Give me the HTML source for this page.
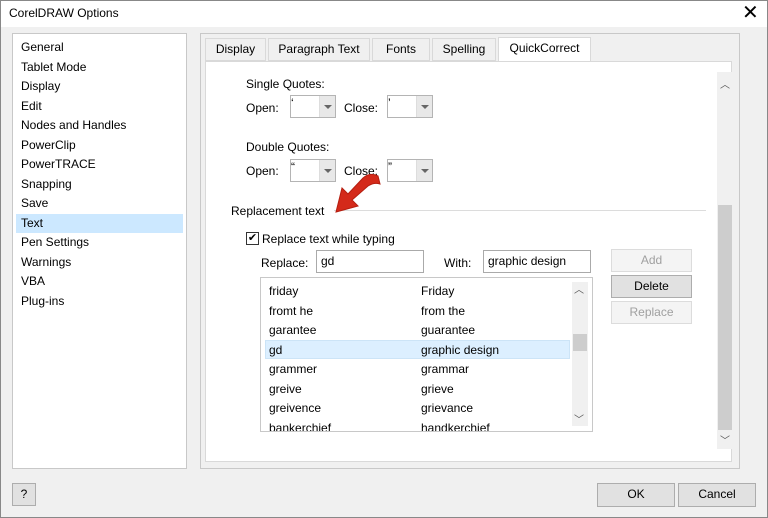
<!DOCTYPE html>
<html><head><style>
*{box-sizing:border-box;margin:0;padding:0}
body{width:768px;height:518px;background:#f0f0f0;font-family:"Liberation Sans",sans-serif;font-size:12px;color:#000;position:relative;overflow:hidden}
.a{position:absolute}
.box{position:absolute;background:#fff;border:1px solid #c8c8c8}
.btn{position:absolute;background:#e1e1e1;border:1px solid #adadad;text-align:center;line-height:20px}
.dis{background:#f4f4f4;border-color:#dcdcdc;color:#a0a0a0}
.tab{position:absolute;top:38px;height:23px;border:1px solid #d9d9d9;background:#f0f0f0;line-height:20px;text-align:center}
.dd{position:absolute;width:46px;height:23px;background:#fff;border:1px solid #b4b4b4}
.dd i{position:absolute;right:0;top:0;width:16px;height:21px;background:#e8e8e8;border-left:1px solid #ddd}
.dd i:after{content:"";position:absolute;left:4px;top:9px;border:4px solid transparent;border-top:4px solid #666}
.li div{height:19.5px;line-height:19.5px}
</style></head><body>
<div class="a" style="left:0;top:0;width:768px;height:518px;border:1px solid #888"></div>
<div class="a" style="left:1px;top:1px;width:766px;height:26px;background:#fff"></div>
<div class="a" style="left:9px;top:6px;font-size:12px">CorelDRAW Options</div>
<div class="a" style="left:742px;top:0px;font-size:20px">✕</div>

<div class="box li" style="left:12px;top:33px;width:175px;height:436px;padding:4px 0 0 8px">
<div>General</div><div>Tablet Mode</div><div>Display</div><div>Edit</div><div>Nodes and Handles</div><div>PowerClip</div><div>PowerTRACE</div><div>Snapping</div><div>Save</div>
<div style="background:#cce8ff;margin-left:-5px;padding-left:5px;margin-right:3px">Text</div>
<div>Pen Settings</div><div>Warnings</div><div>VBA</div><div>Plug-ins</div></div>

<div class="box" style="left:200px;top:33px;width:540px;height:436px;background:#f0f0f0"></div>
<div class="tab" style="left:205px;width:61px">Display</div>
<div class="tab" style="left:268px;width:102px">Paragraph Text</div>
<div class="tab" style="left:372px;width:58px">Fonts</div>
<div class="tab" style="left:432px;width:64px">Spelling</div>
<div class="tab" style="left:498px;top:37px;height:25px;width:93px;background:#fff;border-bottom:none">QuickCorrect</div>
<div class="box" style="left:205px;top:61px;width:527px;height:401px;border-color:#d9d9d9"></div>

<div class="a" style="left:717px;top:72px;width:16px;height:377px;background:#f0f0f0"></div>
<div class="a" style="left:718px;top:205px;width:14px;height:225px;background:#cdcdcd"></div>
<div class="a" style="left:720px;top:76px;font-size:10px;color:#555">︿</div>
<div class="a" style="left:720px;top:432px;font-size:10px;color:#555">﹀</div>

<div class="a" style="left:246px;top:77px">Single Quotes:</div>
<div class="a" style="left:246px;top:101px">Open:</div>
<div class="dd" style="left:290px;top:95px">‘<i></i></div>
<div class="a" style="left:344px;top:101px">Close:</div>
<div class="dd" style="left:387px;top:95px">’<i></i></div>
<div class="a" style="left:246px;top:140px">Double Quotes:</div>
<div class="a" style="left:246px;top:164px">Open:</div>
<div class="dd" style="left:290px;top:159px">“<i></i></div>
<div class="a" style="left:344px;top:164px">Close:</div>
<div class="dd" style="left:387px;top:159px">”<i></i></div>
<div class="a" style="left:231px;top:204px">Replacement text</div>
<div class="a" style="left:334px;top:210px;width:372px;height:1px;background:#dcdcdc"></div>
<svg class="a" style="left:330px;top:168px" width="55" height="48"><path d="M48 8 Q40 4 33 10 L18 26 L12 20 L6 44 L28 38 L22 32 L38 18 Q44 14 50 16 Z" fill="#d42a1a" stroke="#b51e10"/></svg>

<div class="a" style="left:246px;top:232px;width:13px;height:13px;border:1px solid #333;background:#fff;font-size:11px;line-height:11px;text-align:center">✔</div>
<div class="a" style="left:262px;top:232px">Replace text while typing</div>
<div class="a" style="left:261px;top:256px">Replace:</div>
<div class="box" style="left:316px;top:250px;width:108px;height:23px;border-color:#aaa;padding:3px 4px">gd</div>
<div class="a" style="left:444px;top:256px">With:</div>
<div class="box" style="left:483px;top:250px;width:108px;height:23px;border-color:#aaa;padding:3px 4px">graphic design</div>
<div class="box li" style="left:260px;top:277px;width:333px;height:155px;overflow:hidden;padding:4px 0 0 0">
<div style="position:absolute;left:4px;top:62px;width:305px;height:19px;background:#dcefff;border:1px solid #cce4f7"></div>
<div style="position:absolute;left:311px;top:4px;width:16px;height:144px;background:#f0f0f0"></div>
<div style="position:absolute;left:312px;top:56px;width:14px;height:17px;background:#cdcdcd"></div>
<div style="position:absolute;left:313px;top:3px;font-size:10px;color:#555">︿</div>
<div style="position:absolute;left:313px;top:133px;font-size:10px;color:#555">﹀</div>
<div style="position:relative;left:8px;width:300px">
<div>friday<span class="a" style="left:152px">Friday</span></div>
<div>fromt he<span class="a" style="left:152px">from the</span></div>
<div>garantee<span class="a" style="left:152px">guarantee</span></div>
<div>gd<span class="a" style="left:152px">graphic design</span></div>
<div>grammer<span class="a" style="left:152px">grammar</span></div>
<div>greive<span class="a" style="left:152px">grieve</span></div>
<div>greivence<span class="a" style="left:152px">grievance</span></div>
<div>bankerchief<span class="a" style="left:152px">handkerchief</span></div>
</div></div>
<div class="btn dis" style="left:611px;top:249px;width:81px;height:23px">Add</div>
<div class="btn" style="left:611px;top:275px;width:81px;height:23px">Delete</div>
<div class="btn dis" style="left:611px;top:301px;width:81px;height:23px">Replace</div>

<div class="btn" style="left:12px;top:483px;width:24px;height:23px;background:#e1e1e1">?</div>
<div class="btn" style="left:597px;top:483px;width:78px;height:24px">OK</div>
<div class="btn" style="left:678px;top:483px;width:78px;height:24px">Cancel</div>
</body></html>
